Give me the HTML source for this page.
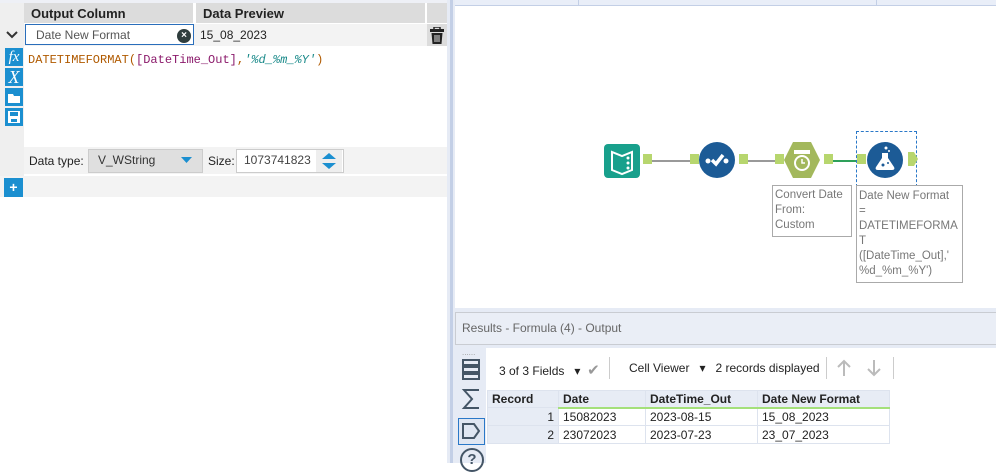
<!DOCTYPE html>
<html><head><style>
body{margin:0;width:996px;height:463px;position:relative;overflow:hidden;background:#fff;font-family:"Liberation Sans",sans-serif;font-size:12px;color:#222}
.a{position:absolute}
.ic{position:absolute;left:5px;width:18px;height:18px;background:#1b8fd0;color:#fff;text-align:center;font:italic 15px "Liberation Serif",serif;line-height:18px}
td{padding:0 4px;height:16px;border:1px solid #dde3ee;font-size:12px;box-sizing:border-box}
</style></head><body>
<div class="a" style="left:0;top:0;width:447px;height:3px;background:#eef0f6"></div>
<div class="a" style="left:0;top:3px;width:24px;height:194px;background:#efefef"></div>
<div class="a" style="left:24px;top:3px;width:423px;height:20px;background:#dcdcdc"></div>
<div class="a" style="left:193px;top:3px;width:3px;height:20px;background:#fff"></div>
<div class="a" style="left:425px;top:3px;width:2px;height:44px;background:#fff"></div>
<div class="a" style="left:31px;top:6px;font-weight:bold;font-size:13px">Output Column</div>
<div class="a" style="left:203px;top:6px;font-weight:bold;font-size:13px">Data Preview</div>
<div class="a" style="left:24px;top:24px;width:423px;height:22px;background:#f3f3f3"></div>
<div class="a" style="left:427px;top:24px;width:20px;height:22px;background:#dcdcdc"></div>
<svg class="a" style="left:430px;top:27px" width="14" height="17" viewBox="0 0 14 17"><rect x="0" y="2" width="14" height="3" fill="#222"/><rect x="4" y="0" width="6" height="3" fill="none" stroke="#222" stroke-width="1.5"/><path d="M1.5 6h11l-1 11h-9z" fill="#222"/><path d="M5 8v7M7 8v7M9 8v7" stroke="#ddd" stroke-width="1"/></svg>
<svg class="a" style="left:6px;top:31px" width="12" height="8"><path d="M1 1l5 5 5-5" stroke="#333" stroke-width="2" fill="none"/></svg>
<div class="a" style="left:25px;top:24px;width:167px;height:19px;border:1px solid #2a6ebb;background:#fff"></div>
<div class="a" style="left:36px;top:28px;color:#555">Date New Format</div>
<div class="a" style="left:177px;top:29px;width:14px;height:14px;border-radius:50%;background:#2f3d3d;color:#fff;font-size:10px;text-align:center;line-height:14px;font-weight:bold">×</div>
<div class="a" style="left:200px;top:28px;font-size:12px">15_08_2023</div>
<div class="ic" style="top:48px">fx</div>
<div class="ic" style="top:68px;font-size:18px">X</div>
<div class="ic" style="top:88px"><svg width="18" height="18"><path d="M3 6h5l1 2h6v7H3z" fill="#fff"/></svg></div>
<div class="ic" style="top:108px"><svg width="18" height="18"><rect x="3" y="3" width="12" height="12" fill="#fff"/><rect x="5" y="4" width="8" height="4" fill="#1b8fd0"/><rect x="6" y="11" width="6" height="3" fill="#1b8fd0"/></svg></div>
<div class="a" style="left:28px;top:53px;font-family:'Liberation Mono',monospace;font-size:12px;color:#b05a00">DATETIMEFORMAT(<span style="color:#8b1a6b">[DateTime_Out]</span>,<span style="color:#1a8a8a;font-style:italic">'%d_%m_%Y'</span>)</div>
<div class="a" style="left:24px;top:147px;width:423px;height:27px;background:#f3f3f3"></div>
<div class="a" style="left:29px;top:154px">Data type:</div>
<div class="a" style="left:88px;top:149px;width:113px;height:22px;background:#dfdfdf;border:1px solid #ccc"></div>
<div class="a" style="left:98px;top:153px;color:#333">V_WString</div>
<svg class="a" style="left:181px;top:157px" width="11" height="7"><path d="M0 0h11L5.5 6z" fill="#1b8fd0"/></svg>
<div class="a" style="left:208px;top:154px">Size:</div>
<div class="a" style="left:236px;top:149px;width:106px;height:22px;background:#fff;border:1px solid #ccc"></div>
<div class="a" style="left:244px;top:153px;color:#444">1073741823</div>
<div class="a" style="left:316px;top:150px;width:26px;height:22px;background:#eee"></div>
<svg class="a" style="left:322px;top:152px" width="14" height="18"><path d="M0 7L7 1l7 6zM0 11l7 6 7-6z" fill="#1b8fd0"/></svg>
<div class="a" style="left:0;top:176px;width:447px;height:21px;background:#f3f3f3"></div>
<div class="a" style="left:4px;top:178px;width:19px;height:19px;background:#1b8fd0;color:#fff;text-align:center;line-height:19px;font-weight:bold;font-size:14px">+</div>
<div class="a" style="left:447px;top:0;width:8px;height:463px;background:#e6ebf5"></div>
<div class="a" style="left:450px;top:0;width:3px;height:463px;background:#c3cfe6"></div>
<div class="a" style="left:455px;top:0;width:541px;height:5px;background:#e9eef8;border-bottom:1px solid #c3cfe6"></div>
<div class="a" style="left:578px;top:0;width:1px;height:5px;background:#c3cfe6"></div>
<div class="a" style="left:876px;top:0;width:1px;height:5px;background:#c3cfe6"></div>
<div class="a" style="left:604px;top:144px;width:36px;height:34px;background:#18a08c;border-radius:4px"></div>
<svg class="a" style="left:604px;top:144px" width="36" height="34"><path d="M8 8v18l10 4 10-4V8l-10 4z" fill="none" stroke="#fff" stroke-width="2"/><circle cx="24" cy="14" r="1.5" fill="#fff"/><circle cx="24" cy="19" r="1.5" fill="#fff"/><circle cx="24" cy="24" r="1.5" fill="#fff"/></svg>
<div class="a" style="left:643px;top:154px;width:9px;height:10px;background:#b7d66e"></div>
<div class="a" style="left:652px;top:160px;width:40px;height:2px;background:#999"></div>
<div class="a" style="left:690px;top:154px;width:9px;height:10px;background:#b7d66e"></div>
<div class="a" style="left:699px;top:142px;width:36px;height:36px;border-radius:50%;background:#1c5b96"></div>
<svg class="a" style="left:699px;top:142px" width="36" height="36"><circle cx="9" cy="19" r="2.5" fill="#fff"/><circle cx="27" cy="19" r="2.5" fill="#fff"/><path d="M13 18l4 4 7-9" stroke="#fff" stroke-width="3.5" fill="none"/></svg>
<div class="a" style="left:739px;top:154px;width:9px;height:10px;background:#b7d66e"></div>
<div class="a" style="left:748px;top:160px;width:30px;height:2px;background:#999"></div>
<div class="a" style="left:775px;top:154px;width:9px;height:10px;background:#b7d66e"></div>
<div class="a" style="left:784px;top:142px;width:36px;height:36px;background:#a3b85c;clip-path:polygon(25% 0,75% 0,100% 50%,75% 100%,25% 100%,0 50%)"></div>
<svg class="a" style="left:784px;top:142px" width="36" height="36"><rect x="10" y="8" width="16" height="4" fill="#fff"/><circle cx="18" cy="21" r="7" fill="none" stroke="#fff" stroke-width="2"/><path d="M18 17v4h3" stroke="#fff" stroke-width="1.5" fill="none"/></svg>
<div class="a" style="left:824px;top:154px;width:9px;height:10px;background:#b7d66e"></div>
<div class="a" style="left:833px;top:160px;width:26px;height:2px;background:#2ea05a"></div>
<div class="a" style="left:857px;top:154px;width:9px;height:10px;background:#b7d66e"></div>
<div class="a" style="left:856px;top:131px;width:59px;height:54px;border:1px dashed #2a78c8"></div>
<div class="a" style="left:867px;top:142px;width:36px;height:36px;border-radius:50%;background:#1c5b96"></div>
<svg class="a" style="left:867px;top:142px" width="36" height="36"><path d="M15 11h6v5l6 9c1 2 0 3-2 3H11c-2 0-3-1-2-3l6-9z" fill="#fff"/><circle cx="19" cy="6" r="1.5" fill="#fff"/><circle cx="22" cy="9" r="1" fill="#fff"/><circle cx="16" cy="23" r="1.5" fill="#1c5b96"/><circle cx="21" cy="21" r="1" fill="#1c5b96"/></svg>
<div class="a" style="left:908px;top:152px;width:10px;height:14px;background:#b7d66e;clip-path:polygon(0 0,60% 0,100% 50%,60% 100%,0 100%)"></div>
<div class="a" style="left:772px;top:185px;width:80px;height:52px;border:1px solid #aaa;background:#fff;color:#777;font-size:11.5px;line-height:15px;padding:2px 0 0 2px;box-sizing:border-box">Convert Date From:<br>Custom</div>
<div class="a" style="left:856px;top:185px;width:107px;height:98px;border:1px solid #aaa;background:#fff;color:#777;font-size:11.5px;line-height:15px;padding:3px 0 0 2px;box-sizing:border-box">Date New Format<br>=<br>DATETIMEFORMA<br>T<br>([DateTime_Out],'<br>%d_%m_%Y')</div>
<div class="a" style="left:453px;top:308px;width:543px;height:155px;background:#e6ebf5"></div>
<div class="a" style="left:455px;top:312px;width:541px;height:31px;background:#eaeef6;border:1px solid #c9ccd2"></div>
<div class="a" style="left:462px;top:321px;color:#666">Results - Formula (4) - Output</div>
<div class="a" style="left:486px;top:348px;width:510px;height:40px;background:#fff"></div>
<div class="a" style="left:499px;top:361px">3 of 3 Fields&nbsp;&nbsp;&nbsp;▾&nbsp;&nbsp;<span style="color:#999;font-size:15px">✔</span></div>
<div class="a" style="left:609px;top:357px;width:1px;height:22px;background:#ccc"></div>
<div class="a" style="left:629px;top:361px">Cell Viewer&nbsp;&nbsp;&nbsp;▾&nbsp;&nbsp;&nbsp;2 records displayed</div>
<div class="a" style="left:826px;top:357px;width:1px;height:22px;background:#ccc"></div>
<svg class="a" style="left:836px;top:359px" width="48" height="18"><path d="M8 17V2M2 8l6-6 6 6M38 1v15M32 10l6 6 6-6" stroke="#bbb" stroke-width="2" fill="none"/></svg>
<div class="a" style="left:893px;top:357px;width:1px;height:22px;background:#ccc"></div>
<div class="a" style="left:486px;top:388px;width:510px;height:75px;background:#fff"></div>
<div class="a" style="left:462px;top:348px;color:#999;font-size:8px">......</div>
<svg class="a" style="left:461px;top:358px" width="22" height="24"><rect x="2" y="2" width="16" height="5" fill="none" stroke="#456" stroke-width="2"/><rect x="2" y="9" width="16" height="5" fill="none" stroke="#456" stroke-width="2"/><rect x="2" y="16" width="16" height="5" fill="none" stroke="#456" stroke-width="2"/></svg>
<svg class="a" style="left:461px;top:387px" width="22" height="24"><path d="M18 3H3l8 9-8 9h15" fill="none" stroke="#456" stroke-width="2"/></svg>
<div class="a" style="left:458px;top:418px;width:25px;height:25px;border:1px solid #2a78c8;background:#dfe6f2"></div>
<svg class="a" style="left:461px;top:421px" width="20" height="20"><path d="M2 3h11l5 7-5 7H2z" fill="none" stroke="#456" stroke-width="2"/></svg>
<div class="a" style="left:460px;top:448px;width:20px;height:20px;border:2px solid #456;border-radius:50%;text-align:center;font-weight:bold;color:#456;font-size:15px;line-height:20px">?</div>
<table class="a" style="left:487px;top:390px;border-collapse:collapse;table-layout:fixed">
<tr style="background:#e7ecf5;font-weight:bold;height:17px"><td style="width:71px">Record</td><td style="width:87px;border-bottom:2px solid #a4e07a">Date</td><td style="width:112px;border-bottom:2px solid #a4e07a">DateTime_Out</td><td style="width:132px;border-bottom:2px solid #a4e07a">Date New Format</td></tr>
<tr style="height:18px"><td style="text-align:right;background:#e7ecf5">1</td><td>15082023</td><td>2023-08-15</td><td>15_08_2023</td></tr>
<tr style="height:18px"><td style="text-align:right;background:#e7ecf5">2</td><td>23072023</td><td>2023-07-23</td><td>23_07_2023</td></tr>
</table>
</body></html>
